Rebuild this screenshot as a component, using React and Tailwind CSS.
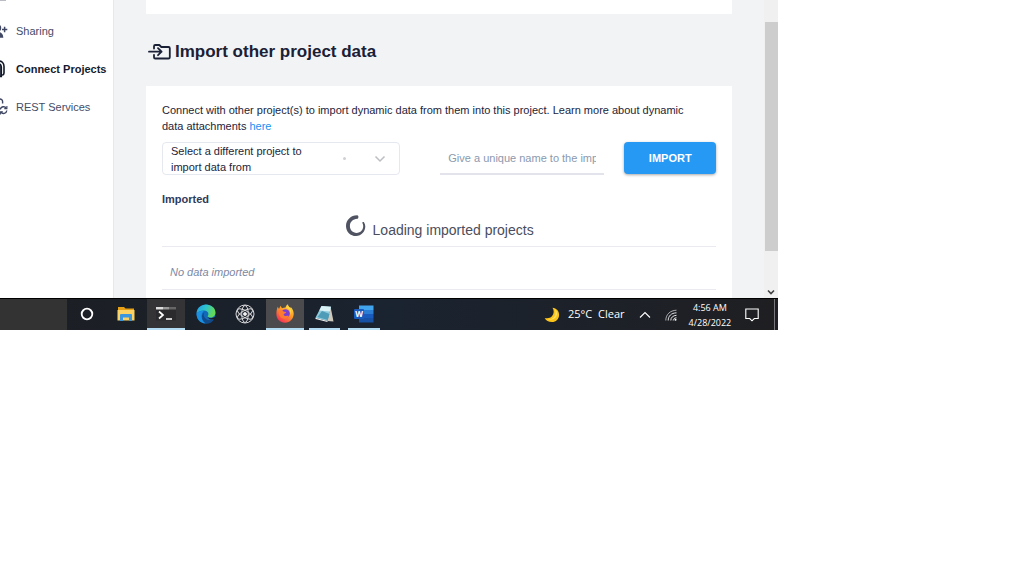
import React, { useState } from 'react';

const navItems = [
    { label: 'Sharing', icon: UserPlusIcon },
    { label: 'Connect Projects', icon: CopyIcon, active: true },
    { label: 'REST Services', icon: ServiceIcon },
];

const taskbarApps = [
    { name: 'Cortana', icon: CortanaIcon },
    { name: 'File Explorer', icon: FolderIcon },
    { name: 'Terminal', icon: TerminalIcon, running: true, tile: 'bg-[#343436]' },
    { name: 'Edge', icon: EdgeIcon },
    { name: 'React Devtools', icon: AtomIcon },
    { name: 'Firefox', icon: FirefoxIcon, running: true, tile: 'bg-[#4b4b4d]' },
    { name: 'Notepad', icon: NotepadIcon, running: true },
    { name: 'Word', icon: WordIcon, running: true },
];

function UserPlusIcon() {
    return (
        <svg width="16" height="16" viewBox="0 0 16 16" className="shrink-0" fill="none" stroke="#3f4763" strokeWidth="1.5">
            <circle cx="5.500" cy="5" r="3" />
            <path d="M.8 14c0-3 2-4.500 4.700-4.500 2.800 0 4.700 1.500 5 4.500z" fill="#3f4763" />
            <path d="M12.600 3.800v5.400M10 6.500h5.300" />
        </svg>
    );
}

function CopyIcon() {
    return (
        <svg width="17" height="18" viewBox="0 0 17 18" className="shrink-0" fill="none" stroke="#101828" strokeWidth="1.600">
            <path d="M3 1h4.500C11 1 13 3.500 13 6.500V13c0 1.200-.6 2-1.800 2.300" />
            <path d="M1 3.500h5.500C9 3.500 10.300 5 10.300 7v9.500H1z" fill="#4a4f5e" />
        </svg>
    );
}

function ServiceIcon() {
    return (
        <svg width="16" height="18" viewBox="0 0 16 18" className="shrink-0" fill="none" stroke="#3f4763" strokeWidth="1.400">
            <path d="M1 7V4a3 3 0 0 1 3-3h4a2.600 2.600 0 0 1 2.600 2.600V5.500" />
            <path d="M8.300 11.500a3.300 3.300 0 0 1 6-1.300M14.800 12.500a3.300 3.300 0 0 1-6 1.500" />
            <path d="M14.900 8v2.600h-2.600M8.400 16.500v-2.800h2.500" strokeWidth="1.100" />
        </svg>
    );
}

function ImportFolderIcon() {
    return (
        <svg width="23" height="16" viewBox="0 0 23 16" className="shrink-0" fill="none" stroke="#1a2035" strokeWidth="1.800" strokeLinejoin="round" strokeLinecap="round">
            <path d="M6 4.500V2.300Q6 1 7.300 1h4l2 2h7.200Q21.800 3 21.800 4.300v8.900q0 1.300-1.300 1.300H7.300Q6 14.500 6 13.200v-2.400" />
            <path d="M1 7.700h12.500M10 4.200l3.600 3.500-3.600 3.500" />
        </svg>
    );
}

function Spinner() {
    return (
        <svg width="22" height="24" viewBox="0 0 22 24" className="shrink-0" fill="none">
            <path
                d="M12.200 1.200C13.800 1.200 13.900 4.600 12.200 4.800 8 5.200 4.900 7.800 4.900 12c0 3.900 2.900 6.900 6.600 6.900 4.200 0 6.900-3.200 6.700-7.100-.1-1.100-.4-1.900-.8-2.700-.4-1 1.200-1.600 1.700-.6.8 1.200 1.200 2.600 1.200 4.100 0 5-4 9.400-9.200 9.400C5.300 22 1 17.600 1 11.900 1 6 5.800 1.200 12.200 1.200z"
                fill="#4f5362"
            />
        </svg>
    );
}

function CortanaIcon() {
    return (
        <svg width="14" height="14" viewBox="0 0 14 14" fill="none" stroke="#fff" strokeWidth="1.800">
            <circle cx="7" cy="7" r="5.300" />
        </svg>
    );
}

function FolderIcon() {
    return (
        <svg width="18" height="16" viewBox="0 0 18 16">
            <path d="M1 1h6l1.500 1.500H17V5H1z" fill="#e8a117" />
            <path d="M.5 4h17v10.500H.5z" fill="#fbd264" />
            <path d="M3 9q0-1 1-1h10q1 0 1 1v6h-3v-3.500H6V15H3z" fill="#3a96dd" />
        </svg>
    );
}

function TerminalIcon() {
    return (
        <svg width="20" height="16" viewBox="0 0 20 16" fill="none">
            <path d="M0 1h20v13.500H0z" fill="#2b2b2d" />
            <path d="M0 1h7v2.500H0z" fill="#dcdcdc" />
            <path d="M7 1h6v2.500H7z" fill="#999" />
            <path d="M13 1h7v2.500h-7z" fill="#666" />
            <path d="M3 5.500l4 3.500-4 3.500M10 13h6" stroke="#fff" strokeWidth="1.700" />
        </svg>
    );
}

function EdgeIcon() {
    return (
        <svg width="20" height="20" viewBox="0 0 20 20">
            <defs>
                <linearGradient id="edgeTop" x1="0" y1="0" x2="1" y2="0.300">
                    <stop offset="0" stopColor="#249ee4" />
                    <stop offset="0.500" stopColor="#2dc3cf" />
                    <stop offset="1" stopColor="#63d957" />
                </linearGradient>
            </defs>
            <circle cx="10" cy="10" r="9.500" fill="#1269b9" />
            <path d="M.5 9.500C.8 4 5 .5 10 .5c5.500 0 9.500 3.800 9.500 8 0 3-2.300 5-5.200 5-2 0-3-.8-2.600-1.600.5-.7.7-1.200.7-2 0-1.800-1.900-3.400-4.500-3.400C4.500 6.500 1.500 8 .5 9.500z" fill="url(#edgeTop)" />
            <path d="M7.800 7.300C4.500 9.500 4.700 16 9.500 19.400 4 19.300.4 15 .5 9.500c1.500-2 4.500-3 7.300-2.200z" fill="#1b8fe0" />
            <path d="M8.300 8.500c-1.800 3.500 1 7.600 5.500 7.600 2 0 3.600-.6 4.400-1.100-1.500 2.700-4 4.500-7.200 4.500C5.500 18 4.500 10.500 8.300 8.500z" fill="#114a8b" />
            <path d="M11.500 12.700c1.200 1.500 3.500 1.800 5.500 1.100l2-.8.500 1.500-1.200.7c-2.500 1-5.600.2-6.800-2.500z" fill="#1c1d21" />
        </svg>
    );
}

function AtomIcon() {
    return (
        <svg width="20" height="20" viewBox="0 0 20 20" fill="none" stroke="#d8d8da" strokeWidth="1">
            <circle cx="10" cy="10" r="9" />
            <ellipse cx="10" cy="10" rx="8.500" ry="3.300" transform="rotate(30 10 10)" />
            <ellipse cx="10" cy="10" rx="8.500" ry="3.300" transform="rotate(90 10 10)" />
            <ellipse cx="10" cy="10" rx="8.500" ry="3.300" transform="rotate(150 10 10)" />
            <circle cx="10" cy="10" r="1.500" fill="#fff" />
        </svg>
    );
}

function FirefoxIcon() {
    return (
        <svg width="18" height="19" viewBox="0 0 18 19">
            <defs>
                <linearGradient id="fox" x1="0.900" y1="0" x2="0.200" y2="1">
                    <stop offset="0" stopColor="#ffe14a" />
                    <stop offset="0.450" stopColor="#ff9a26" />
                    <stop offset="1" stopColor="#f5285c" />
                </linearGradient>
            </defs>
            <path d="M9.500 3.500C10 1.500 11 .7 12 .3c0 1.700 1.300 2.700 2.400 4 .2-.6.200-1 .1-1.500 2 1.700 3.200 4.400 3.200 7 0 5-3.800 8.900-8.700 8.900S.4 14.900.4 10c0-2.600.4-4.700 1.300-7.200L3 5l1.500-3.200L6 4.300c1.200-.5 2.400-.6 3.500-.8z" fill="url(#fox)" />
            <circle cx="9.500" cy="9.500" r="4.300" fill="#7d3fd0" />
            <path d="M2.500 6.500c2-.6 4-.2 5.300 1.200l2.500.3c-.3 1.200-1.500 1.400-2.400 2-.8.7.3 2.400 2.300 1.900 1.200-.3 2-.2 2.600.1-1 2-3 3-5.300 2.500C4.500 14 2.500 11 2.500 6.500z" fill="#ff7b30" />
            <path d="M10 3.800c3 .5 5 3 4.500 7 1-1 1.300-4-.2-6.500L12 2z" fill="#ffd83d" />
        </svg>
    );
}

function NotepadIcon() {
    return (
        <svg width="19" height="18" viewBox="0 0 19 18">
            <path d="M15.500 1.500L18.500 16.500l-6-.5z" fill="#cfc9bb" />
            <path d="M6.500 1l9.500.8L12.500 16 .5 12.800z" fill="#8ecadb" />
            <path d="M6.500 1l9.500.8-1.200 4.700L4.300 5.500z" fill="#d9f1f5" />
            <path d="M7 6l7.500 3-1.800 6L2.500 12z" fill="#4f9cb8" />
            <path d="M.5 12.800l12 3.200v1L.5 14z" fill="#f1f1f1" />
        </svg>
    );
}

function WordIcon() {
    return (
        <svg width="20" height="18" viewBox="0 0 20 18">
            <path d="M5 .5h14.500V5H5z" fill="#41a5ee" />
            <path d="M5 5h14.500v4H5z" fill="#2b7cd3" />
            <path d="M5 9h14.500v4H5z" fill="#185abd" />
            <path d="M5 13h14.500v4.500H5z" fill="#1651a5" />
            <rect x="0" y="4" width="10" height="10" rx="1" fill="#185abd" />
            <text x="5" y="12" textAnchor="middle" fontSize="8" fontWeight="700" fontFamily="Open Sans, sans-serif" fill="#fff">W</text>
        </svg>
    );
}

function MoonIcon() {
    return (
        <svg width="16" height="16" viewBox="0 0 16 16">
            <path d="M8.500.8c4 .4 6.700 3.300 6.600 7.100C15 12 12 15 8 15c-3.400 0-6.200-1.500-7.300-4.100 2.500.8 5.400.4 7.200-1.600C10.200 6.800 10.200 3.300 8.500.8z" fill="#fcc419" />
            <path d="M10.500 2c2.500 1.500 3.500 5 1.500 8-2 2.500-5.500 3.300-8.500 2.500 3 .2 5.500-.8 7-3 1.500-2.300 1.300-5 0-7.500z" fill="#ffe26b" />
        </svg>
    );
}

function WifiIcon() {
    return (
        <svg width="12" height="12" viewBox="0 0 12 12" fill="none" stroke="#e4e4e6" strokeWidth="1">
            <path d="M.8 11.500C.8 5.500 5 1.500 11.500 1.200" opacity=".7" />
            <path d="M3.200 11.500c0-4.500 3-7.500 8.300-7.700" />
            <path d="M5.800 11.500c0-3 2.200-5 5.700-5.200" />
            <path d="M8.200 11.500c0-1.500 1.300-2.700 3.300-2.700" />
            <circle cx="10.500" cy="10.700" r="1" fill="#fff" stroke="none" />
        </svg>
    );
}

const Sidebar = () => (
    <nav className="flex w-[114px] shrink-0 flex-col border-r border-[#e6e8eb] bg-white">
        <div className="h-3">
            <div className="h-px w-[6px] bg-[#b9bcc4]"></div>
        </div>
        {navItems.map(({ label, icon: Icon, active }) => (
            <a
                key={label}
                href="#"
                className={`flex h-[38px] items-center gap-2 text-[11px] whitespace-nowrap ${active ? 'font-bold text-[#151b2e]' : 'text-[#444c66]'}`}
            >
                <span className="flex w-2 shrink-0 justify-end overflow-hidden">
                    <Icon />
                </span>
                {label}
            </a>
        ))}
    </nav>
);

const ImportForm = () => {
    const [name, setName] = useState('');

    return (
        <form className="mt-2 flex items-start" onSubmit={(e) => e.preventDefault()}>
            <div className="relative w-[43%]">
                <select
                    aria-label="Project to import data from"
                    className="block h-[33px] w-full appearance-none rounded border border-[#e6e8f0] bg-white pr-[70px] pl-2 text-[11px] leading-4 whitespace-normal text-[#1d2439]"
                >
                    <option>Select a different project to import data from</option>
                </select>
                <div className="pointer-events-none absolute inset-y-0 right-[13px] flex items-center gap-[27px]">
                    <span className="size-[3px] rounded-full bg-[#d0d1d4]"></span>
                    <svg width="14" height="10" viewBox="0 0 14 10" fill="none" stroke="#bcbec3" strokeWidth="1.500">
                        <path d="M2.500 2.500L7 7l4.500-4.500" />
                    </svg>
                </div>
            </div>
            <input
                type="text"
                aria-label="Unique name"
                value={name}
                onChange={(e) => setName(e.target.value)}
                placeholder="Give a unique name to the import"
                className="ml-10 h-[33px] min-w-0 flex-1 border-b-2 border-[#e3e4eb] px-2 text-[11px] text-[#1d2439] outline-none placeholder:text-[#8b99ae]"
            />
            <button
                type="submit"
                className="ml-5 h-8 w-[92px] rounded bg-[#2699f5] text-[11px] font-bold text-white shadow-[0_1px_3px_rgba(0,0,0,0.35)]"
            >
                IMPORT
            </button>
        </form>
    );
};

const ImportedTable = () => (
    <table className="w-full border-collapse text-left">
        <thead>
            <tr className="border-b border-[#e9ebf0]">
                <th className="p-0 font-normal">
                    <div className="pt-4 text-[11px] leading-4 font-bold text-[#303a5c]">Imported</div>
                    <div className="flex items-center justify-center gap-[6px] pt-[5px] pb-[6px]">
                        <Spinner />
                        <span className="pt-2 text-[14px] leading-5 text-[#4a4e5c]">Loading imported projects</span>
                    </div>
                </th>
            </tr>
        </thead>
        <tbody>
            <tr className="border-b border-[#e9ebf0]">
                <td className="px-2 pt-[17px] pb-[9px] text-[11px] leading-4 text-[#7d88a3] italic">No data imported</td>
            </tr>
        </tbody>
    </table>
);

const ScrollTrack = () => (
    <div className="flex w-[14px] shrink-0 flex-col items-end bg-[#f0f0f0] pt-[22px]">
        <div className="h-[229px] w-[13px] bg-[#cdcdcd]"></div>
        <svg width="14" height="12" viewBox="0 0 14 12" className="mt-auto" fill="none" stroke="#404040" strokeWidth="1.600">
            <path d="M4 4.500l3 3 3-3" />
        </svg>
    </div>
);

const Taskbar = () => (
    <footer className="flex h-8 border-t border-black bg-linear-to-r from-[#1c1e22] via-[#1a2330] to-[#1f1f22] font-['Open_Sans',sans-serif] text-white">
        <div className="w-[67px] shrink-0 bg-[#333333]"></div>
        <div className="grid w-[317px] shrink-0 grid-cols-8">
            {taskbarApps.map(({ name, icon: Icon, running, tile }) => (
                <button
                    key={name}
                    type="button"
                    aria-label={name}
                    className={`flex items-center justify-center border-b-2 ${running ? 'border-[#b4dcf2]' : 'border-transparent'} ${tile ? `mx-px ${tile}` : 'mx-1'}`}
                >
                    <Icon />
                </button>
            ))}
        </div>
        <div className="ml-auto flex items-center pr-[3px]">
            <MoonIcon />
            <span className="ml-2 flex gap-[6px] text-[11px]">
                <span>25°C</span>
                <span>Clear</span>
            </span>
            <svg width="12" height="8" viewBox="0 0 12 8" className="ml-[14px]" fill="none" stroke="#fff" strokeWidth="1.100">
                <path d="M1 6.500l5-5 5 5" />
            </svg>
            <span className="ml-[14px]">
                <WifiIcon />
            </span>
            <div className="ml-3 text-center text-[9px] leading-[15px]">
                <div>4:56 AM</div>
                <div>4/28/2022</div>
            </div>
            <svg width="14" height="14" viewBox="0 0 14 14" className="ml-[14px]" fill="none" stroke="#fff" strokeWidth="1.100">
                <path d="M.8 1h12.400v9.500H9.300L7 12.800l-2.300-2.300H.8z" />
            </svg>
            <div className="ml-[15px] h-[31px] w-px bg-[#77787b]"></div>
        </div>
    </footer>
);

const App = () => {
    return (
        <div className="min-h-screen bg-white font-['Liberation_Sans',Arial,sans-serif]">
            <div className="w-[76%]">
                <div className="flex">
                    <Sidebar />
                    <main className="min-w-0 flex-1 bg-[#f2f3f5] px-8">
                        <div className="h-[14px] bg-white"></div>
                        <h1 className="flex h-[72px] items-center gap-1 pt-1 pl-[2px] text-[17px] font-bold text-[#1a2035]">
                            <ImportFolderIcon />
                            Import other project data
                        </h1>
                        <section className="bg-white px-4 pt-4 pb-2">
                            <p className="pr-4 text-[11px] leading-4 text-[#1d2439]">
                                Connect with other project(s) to import dynamic data from them into this project. Learn more about dynamic data attachments{' '}
                                <a href="#" className="text-[#1790f5]">here</a>
                            </p>
                            <ImportForm />
                            <ImportedTable />
                        </section>
                    </main>
                    <ScrollTrack />
                </div>
                <Taskbar />
            </div>
        </div>
    );
};

export default App;
